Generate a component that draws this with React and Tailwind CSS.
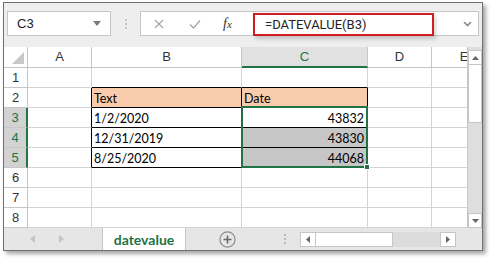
import React from 'react';

const rows = [
  { n: 1 },
  { n: 2, b: 'Text', c: 'Date', kind: 'head' },
  { n: 3, b: '1/2/2020', c: '43832', kind: 'active' },
  { n: 4, b: '12/31/2019', c: '43830', kind: 'range' },
  { n: 5, b: '8/25/2020', c: '44068', kind: 'range' },
  { n: 6 },
  { n: 7 },
  { n: 8 },
];

const cellFont = "font-['Lato',sans-serif] text-[12.5px] leading-[15px] text-black";

function RowCells({ r }) {
  const inTable = r.n >= 2 && r.n <= 5;
  const selRow = r.n >= 3 && r.n <= 5;

  const rowHead = selRow
    ? 'h-[20px] flex items-center justify-center border-b border-[#c6c6c6] border-r-2 border-r-[#217346] bg-[#d2d2d2] text-[#217346]'
    : 'h-[20px] flex items-center justify-center border-b border-r border-[#c6c6c6] bg-white text-[#333]';

  const aCell = inTable
    ? 'h-[20px] border-b border-[#d4d4d4] border-r border-r-black'
    : 'h-[20px] border-b border-r border-[#d4d4d4]';

  let bCell = 'h-[20px] border-b border-r border-[#d4d4d4]';
  if (r.n === 1) bCell = 'h-[20px] border-r border-[#d4d4d4] border-b border-b-black';
  if (inTable) bCell = 'h-[20px] border-b border-r border-black flex items-end pl-[2px] pb-px';
  if (r.kind === 'head') bCell = 'h-[20px] border-b border-r border-black bg-[#f8cbad] flex items-end pl-[2px] pb-px';

  let cCell = 'h-[20px] border-b border-r border-[#d4d4d4]';
  if (r.n === 1) cCell = 'h-[20px] border-r border-[#d4d4d4] border-b border-b-black';
  if (r.kind === 'head') cCell = 'h-[20px] border-b border-r border-black bg-[#f8cbad] flex items-end pl-[2px] pb-px';
  if (r.kind === 'active') cCell = 'relative h-[20px] border-b border-r border-black bg-white flex items-end justify-end pr-[3px] pb-px';
  if (r.kind === 'range') cCell = 'h-[20px] border-b border-r border-black bg-[#c6c6c6] flex items-end justify-end pr-[3px] pb-px';

  return (
    <>
      <div className={rowHead}>{r.n}</div>
      <div className={aCell}></div>
      <div className={bCell}>
        {r.b && <span className={cellFont}>{r.b}</span>}
      </div>
      <div className={cCell}>
        {r.c && <span className={cellFont}>{r.c}</span>}
        {r.kind === 'active' && (
          <div className="absolute left-[-1px] top-[-2px] w-[127px] h-[62px] border-2 border-[#217346] z-10 pointer-events-none">
            <div className="absolute right-[-4px] bottom-[-4px] w-[6px] h-[6px] bg-[#217346] border border-white"></div>
          </div>
        )}
      </div>
      <div className="h-[20px] border-b border-r border-[#d4d4d4]"></div>
      <div className="h-[20px] border-b border-[#d4d4d4]"></div>
    </>
  );
}

export default function App() {
  return (
    <div className="w-[492px] h-[261px] bg-white overflow-hidden font-['Liberation_Sans',Arial,sans-serif] text-[13px]">
      <div className="ml-[3px] mt-[2px] w-[480px] h-[249px] border border-[#707070] bg-[#eeeeee] shadow-[3px_3px_4px_rgba(0,0,0,0.35)] flex flex-col">
        {/* formula bar */}
        <div className="h-[44px] flex items-start pt-[8px]">
          <div className="ml-[3px] w-[104px] h-[25px] bg-white border border-[#c6c6c6] flex items-center justify-between pl-[9px] pr-[9px]">
            <span className="text-[13px] text-[#222]">C3</span>
            <svg width="8" height="5" viewBox="0 0 8 5"><path d="M0 0h8L4 5z" fill="#7a7a7a" /></svg>
          </div>
          <div className="w-[29px] h-[25px] flex flex-col items-center justify-center gap-[2px]">
            <div className="w-[2px] h-[2px] bg-[#c4c4c4]"></div>
            <div className="w-[2px] h-[2px] bg-[#c4c4c4]"></div>
            <div className="w-[2px] h-[2px] bg-[#c4c4c4]"></div>
          </div>
          <div className="w-[339px] h-[25px] bg-white border border-[#c6c6c6] flex items-start">
            <div className="w-[112px] h-[23px] flex items-center">
              <svg className="ml-[13px]" width="10" height="10" viewBox="0 0 10 10">
                <path d="M1 1L9 9M9 1L1 9" stroke="#a8a8a8" strokeWidth="1.3" />
              </svg>
              <svg className="ml-[25px]" width="12" height="10" viewBox="0 0 12 10">
                <path d="M1 5.5L4.5 9L11 1.5" stroke="#a8a8a8" strokeWidth="1.4" fill="none" />
              </svg>
              <span className="ml-[22px] font-['Liberation_Serif',serif] italic text-[14px] text-[#333]">f<span className="text-[11px]">x</span></span>
            </div>
            <div className="mt-[1px] w-[181px] h-[23px] border-2 border-[#d01c24] shadow-[2px_3px_4px_rgba(0,0,0,0.18)] flex items-center pl-[10px]">
              <span className="font-['Roboto',sans-serif] text-[13px] text-[#222]">=DATEVALUE(B3)</span>
            </div>
            <div className="flex-1 h-[23px] flex items-center justify-end pr-[6px]">
              <svg width="9" height="6" viewBox="0 0 9 6"><path d="M1 1l3.5 3.5L8 1" stroke="#8a8a8a" strokeWidth="1.6" fill="none" /></svg>
            </div>
          </div>
        </div>

        {/* grid + vertical scrollbar */}
        <div className="flex">
          <div className="w-[463px] grid grid-cols-[24px_64px_150px_126px_64px_35px] bg-white text-[13px]">
            <div className="h-[21px] border-b border-r border-[#c6c6c6] bg-white flex items-end justify-end pr-[3px] pb-[3px]">
              <svg width="12" height="12" viewBox="0 0 12 12"><path d="M12 0V12H0z" fill="#c8c8c8" /></svg>
            </div>
            <div className="h-[21px] border-b border-r border-[#c6c6c6] flex items-center justify-center text-[#333]">A</div>
            <div className="h-[21px] border-b border-r border-[#c6c6c6] flex items-center justify-center text-[#333]">B</div>
            <div className="h-[21px] border-r border-[#c6c6c6] border-b-2 border-b-[#217346] bg-[#e1e1e1] flex items-center justify-center text-[#217346]">C</div>
            <div className="h-[21px] border-b border-r border-[#c6c6c6] flex items-center justify-center text-[#333]">D</div>
            <div className="h-[21px] border-b border-[#c6c6c6] overflow-hidden">
              <div className="w-[64px] h-full flex items-center justify-center text-[#333]">E</div>
            </div>
            {rows.map((r) => (
              <RowCells key={r.n} r={r} />
            ))}
          </div>
          <div className="w-[15px] h-[181px] border-l border-[#c6c6c6] bg-[#dedede] flex flex-col pt-[3px]">
            <div className="h-[15px] bg-white border border-[#c6c6c6] flex items-center justify-center">
              <svg width="7" height="4" viewBox="0 0 7 4"><path d="M0 4L3.5 0L7 4z" fill="#666" /></svg>
            </div>
            <div className="h-[58px] bg-white border-x border-b border-[#c6c6c6]"></div>
            <div className="flex-1"></div>
            <div className="h-[15px] bg-white border border-[#c6c6c6] flex items-center justify-center">
              <svg width="7" height="4" viewBox="0 0 7 4"><path d="M0 0L3.5 4L7 0z" fill="#666" /></svg>
            </div>
          </div>
        </div>

        {/* sheet tabs */}
        <div className="flex-1 flex bg-[#e6e6e6]">
          <div className="w-[99px] border-r border-[#c6c6c6] flex items-center pl-[26px] gap-[24px]">
            <svg width="5" height="8" viewBox="0 0 5 8"><path d="M5 0V8L0 4z" fill="#c4c4c4" /></svg>
            <svg width="5" height="8" viewBox="0 0 5 8"><path d="M0 0V8L5 4z" fill="#c4c4c4" /></svg>
          </div>
          <div className="w-[82px] bg-white flex items-center justify-center">
            <span className="font-['Lato',sans-serif] font-bold text-[14px] text-[#217346]">datevalue</span>
          </div>
          <div className="flex-1 border-l border-[#c6c6c6] flex items-center">
            <svg className="ml-[33px]" width="17" height="17" viewBox="0 0 17 17">
              <circle cx="8.5" cy="8.5" r="7.6" stroke="#8a8a8a" strokeWidth="1.2" fill="none" />
              <path d="M8.5 4.5v8M4.5 8.5h8" stroke="#6a6a6a" strokeWidth="1.6" />
            </svg>
            <div className="ml-[48px] flex flex-col gap-[2px]">
              <div className="w-[2px] h-[2px] bg-[#b8b8b8]"></div>
              <div className="w-[2px] h-[2px] bg-[#b8b8b8]"></div>
              <div className="w-[2px] h-[2px] bg-[#b8b8b8]"></div>
            </div>
            <div className="ml-[14px] h-[15px] flex">
              <div className="w-[16px] bg-white border border-[#c6c6c6] flex items-center justify-center">
                <svg width="4" height="7" viewBox="0 0 4 7"><path d="M4 0V7L0 3.5z" fill="#666" /></svg>
              </div>
              <div className="w-[77px] bg-white border-y border-r border-[#c6c6c6]"></div>
              <div className="w-[47px] bg-[#dcdcdc]"></div>
              <div className="w-[16px] bg-white border border-[#c6c6c6] flex items-center justify-center">
                <svg width="4" height="7" viewBox="0 0 4 7"><path d="M0 0V7L4 3.5z" fill="#666" /></svg>
              </div>
            </div>
          </div>
        </div>
      </div>
    </div>
  );
}
